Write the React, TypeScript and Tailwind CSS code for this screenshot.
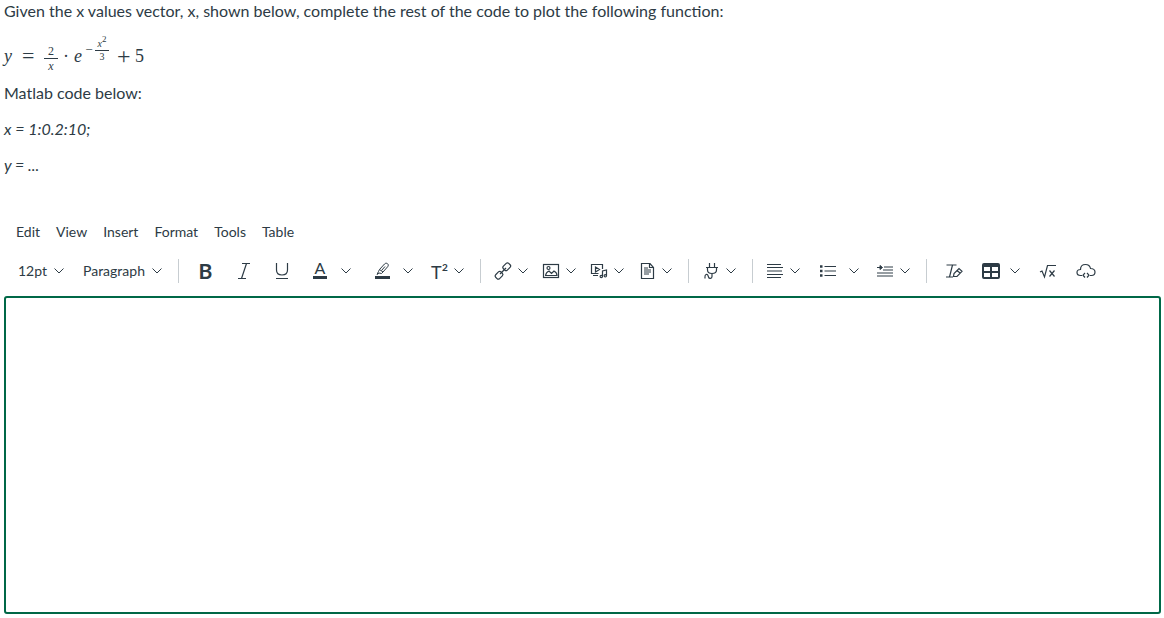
import React from 'react';
import clsx from 'clsx';

type IconProps = { children: React.ReactNode };

const Icon: React.FC<IconProps> = ({ children }) => (
  <svg
    className="w-6 h-6 shrink-0 overflow-visible"
    viewBox="0 0 24 24"
    fill="none"
    stroke="currentColor"
    strokeWidth={1.2}
    aria-hidden="true"
  >
    {children}
  </svg>
);

const Chevron: React.FC = () => (
  <svg className="w-4 h-6 shrink-0" viewBox="0 0 16 24" fill="none" stroke="currentColor" aria-hidden="true">
    <path d="M3.5 9.5L8 14l4.500-4.500" />
  </svg>
);

const icons = {
  bold: (
    <Icon>
      <text x="4.5" y="19.5" fontFamily="Lato" fontSize="21" fontWeight="700" fill="currentColor" stroke="none">B</text>
    </Icon>
  ),
  italic: (
    <Icon>
      <path d="M10 4.5h8M6 19.5h8M14.5 4.5l-5 15" />
    </Icon>
  ),
  underline: (
    <Icon>
      <path d="M6.5 4v7c0 3.5 2 5 5.5 5s5.5-1.5 5.5-5V4M6 19.5h12" />
    </Icon>
  ),
  color: (
    <Icon>
      <text x="12" y="15" textAnchor="middle" fontFamily="Lato" fontSize="16" fill="currentColor" stroke="none">A</text>
      <path d="M5 17h14v3H5z" fill="currentColor" stroke="none" />
    </Icon>
  ),
  highlight: (
    <Icon>
      <path d="M5 17h15v3H5z" fill="currentColor" stroke="none" />
      <path d="M9.5 10.500l5-5.500c1-1 2-1 3-.3s1 2 .2 3L13 13M9.500 10.500L13 13l-1.500 1.500-2.500-.5-2 1.500 1.500-3zM11.500 11.500l3.500-4" strokeWidth="1" />
    </Icon>
  ),
  superscript: (
    <Icon>
      <text x="4" y="20" fontFamily="Lato" fontSize="18" fill="currentColor" stroke="none">T</text>
      <text x="15" y="12" fontFamily="Lato" fontSize="10" fontWeight="700" fill="currentColor" stroke="none">2</text>
    </Icon>
  ),
  link: (
    <Icon>
      <rect x="12" y="5" width="7.5" height="5.5" rx="1.8" transform="rotate(-45 15.75 7.75)" />
      <rect x="4.2" y="13.5" width="7.5" height="5.5" rx="1.8" transform="rotate(-45 8 16.2)" />
      <path d="M9 15l6-6" />
    </Icon>
  ),
  image: (
    <Icon>
      <rect x="4.5" y="5.5" width="15" height="13" />
      <circle cx="9.5" cy="9" r="1.500" />
      <path d="M6 16.5h12c0-2-1-3.5-3-4.5l-2.500 2.500L10 12c-1.500.5-3 2-3.500 4.500" />
    </Icon>
  ),
  media: (
    <Icon>
      <path d="M11.5 14.5h-7v-9h11v4.500M8.500 8v5l4-2.500zM6 16.500h5M15.500 17v-5l4-1v5.500" />
      <circle cx="14.3" cy="17.5" r="1.2" />
      <circle cx="18.3" cy="16.8" r="1.2" />
    </Icon>
  ),
  document: (
    <Icon>
      <path d="M6.5 4.5H15l3.500 4v11h-12zM14.500 4.500v4h4" />
      <path d="M9 8h4v2h3v4h-2v2H9z" fill="currentColor" fillOpacity=".5" stroke="none" />
    </Icon>
  ),
  plug: (
    <Icon>
      <path d="M10.5 4v4.500M15.500 4v4.500M7 8.500h12M8.500 8.500V11c0 2 1.500 3.500 4.500 3.500s4.500-1.500 4.500-3.500V8.500M13 14.500v3c0 2.500-3 2.500-3.500.5S8.500 15 7 15.500s-1 2.500-1 4" />
    </Icon>
  ),
  align: (
    <Icon>
      <path d="M4 5.5h14M4 8.5h16M4 15.5h16M4 18.5h14" />
      <path d="M4 12h15" strokeWidth="2" strokeOpacity=".5" />
    </Icon>
  ),
  list: (
    <Icon>
      <path d="M8.5 7.500H20M8.500 16.500H20" />
      <path d="M8.5 12H20" strokeWidth="2" strokeOpacity=".5" />
      <path d="M4 7.500h2.500M4 12h2.500M4 16.500h2.500" strokeWidth="2.5" />
    </Icon>
  ),
  indent: (
    <Icon>
      <path d="M11 8h9M10 11h10M4 14h16M4 17h16" strokeWidth="2" strokeOpacity=".5" />
      <path d="M4 8.500h5M7 6.500v4l2.500-2z" fill="currentColor" strokeWidth="1" />
    </Icon>
  ),
  clear: (
    <Icon>
      <path d="M4.5 6h10M4 18h7" strokeWidth="2" strokeOpacity=".5" />
      <path d="M10.5 6l-3 12M11.500 17.500l.5-3 5-5 3 2.800-5 5.200zM15 11.500l3 2.500" />
    </Icon>
  ),
  table: (
    <Icon>
      <path
        fill="currentColor"
        stroke="none"
        fillRule="evenodd"
        d="M5 4h14a2 2 0 0 1 2 2v12a2 2 0 0 1-2 2H5a2 2 0 0 1-2-2V6a2 2 0 0 1 2-2zM5 8v4h6V8zM13 8v4h6V8zM5 14v4h6v-4zM13 14v4h6v-4z"
      />
    </Icon>
  ),
  equation: (
    <Icon>
      <path d="M4 13l2-1 2.500 6 3-11.500H20M13.500 11.500l5 6M18.500 11.500l-5 6" />
    </Icon>
  ),
  cloud: (
    <Icon>
      <path d="M8 16.5H6.500C4 16.500 3 15 3 13.500s1.200-3 3.500-3c0-3 2-5 5-5s4.500 1.500 5 4c2.500 0 4.500 1.500 4.500 3.500s-1.500 3.500-3.500 3.500H16M11 14l-2 2.200 2 2.300M13 14l2 2.200-2 2.300" />
    </Icon>
  ),
};

type ToolProps = { label: string; icon: React.ReactNode; className?: string };

const ToolButton: React.FC<ToolProps> = ({ label, icon, className }) => (
  <button type="button" aria-label={label} className={clsx('w-[38px] h-[38px] flex items-center justify-center', className)}>
    {icon}
  </button>
);

const MenuButton: React.FC<ToolProps> = ({ label, icon, className }) => (
  <button type="button" aria-label={label} aria-haspopup="true" className={clsx('h-[38px] flex items-center', className)}>
    {icon}
    <Chevron />
  </button>
);

const SplitButton: React.FC<ToolProps> = ({ label, icon, className }) => (
  <div className={clsx('flex', className)}>
    <ToolButton label={label} icon={icon} />
    <button type="button" aria-label={`${label} options`} className="w-[14px] h-[38px] flex items-center justify-center">
      <Chevron />
    </button>
  </div>
);

const Divider: React.FC = () => <div className="w-px h-6 ml-[13px] shrink-0 bg-[#c7cdd1]" />;

const Formula: React.FC = () => (
  <div className="h-8 pt-2 flex items-center font-['Liberation_Serif'] text-[18px] leading-5">
    <i className="w-[18px]">y</i>
    <span className="w-[22px] text-[22px]">=</span>
    <span className="w-[14px] pt-1 flex flex-col items-center text-[12px] leading-[14px]">
      <span className="w-full text-center border-b border-[#2d3b45]">2</span>
      <i>x</i>
    </span>
    <span className="w-4 text-center">·</span>
    <i className="w-[9px]">e</i>
    <span className="flex items-center pb-3 text-[13px]">
      <span className="w-[12px] text-center">−</span>
      <span className="w-[14px] flex flex-col items-center text-[10px] leading-[12px]">
        <span className="w-full text-center border-b border-[#2d3b45]">
          <i>x</i>
          <sup className="text-[9px]">2</sup>
        </span>
        <span>3</span>
      </span>
    </span>
    <span className="w-[26px] pl-2 text-[24px]">+</span>
    <span>5</span>
  </div>
);

const menus = ['Edit', 'View', 'Insert', 'Format', 'Tools', 'Table'];

const App: React.FC = () => {
  return (
    <main className="bg-white pl-1 pr-[3px] font-['Lato',sans-serif] text-base text-[#2d3b45]">
      <section className="flex flex-col gap-[14px] leading-[22px]">
        <p>Given the x values vector, x, shown below, complete the rest of the code to plot the following function:</p>
        <Formula />
        <p>Matlab code below:</p>
        <p className="italic">x = 1:0.2:10;</p>
        <p className="italic">y = ...</p>
      </section>

      <section className="mt-11">
        <nav className="h-6 pl-3 flex items-center gap-4 text-sm">
          {menus.map((menu) => (
            <button type="button" key={menu}>{menu}</button>
          ))}
        </nav>

        <div role="toolbar" aria-label="Formatting" className="mt-2 pl-[14px] flex items-center text-sm">
          <MenuButton label="Font size" icon={<span className="w-[33px] text-left">12pt</span>} />
          <MenuButton label="Block format" icon={<span className="w-[66px] text-left">Paragraph</span>} className="ml-4" />
          <Divider />
          <ToolButton label="Bold" icon={icons.bold} className="ml-2" />
          <ToolButton label="Italic" icon={icons.italic} />
          <ToolButton label="Underline" icon={icons.underline} />
          <SplitButton label="Text color" icon={icons.color} />
          <SplitButton label="Background color" icon={icons.highlight} className="ml-[10px]" />
          <MenuButton label="Superscript" icon={icons.superscript} className="ml-3" />
          <Divider />
          <div className="ml-[10px] flex gap-2">
            <MenuButton label="Links" icon={icons.link} />
            <MenuButton label="Images" icon={icons.image} />
            <MenuButton label="Media" icon={icons.media} />
            <MenuButton label="Documents" icon={icons.document} />
          </div>
          <Divider />
          <MenuButton label="Apps" icon={icons.plug} className="ml-[10px]" />
          <Divider />
          <MenuButton label="Align" icon={icons.align} className="ml-[10px]" />
          <SplitButton label="Bulleted list" icon={icons.list} className="ml-[6px]" />
          <MenuButton label="Indent" icon={icons.indent} className="ml-3" />
          <Divider />
          <ToolButton label="Clear formatting" icon={icons.clear} className="ml-2" />
          <MenuButton label="Table" icon={icons.table} className="ml-[6px] gap-1" />
          <ToolButton label="Equation" icon={icons.equation} className="ml-[6px]" />
          <ToolButton label="Embed" icon={icons.cloud} />
        </div>

        <textarea
          aria-label="Answer"
          className="mt-[6px] block w-full h-[318px] p-3 resize-none rounded-[3px] border-2 border-[#006847] outline-none"
        />
      </section>
    </main>
  );
};

export default App;
